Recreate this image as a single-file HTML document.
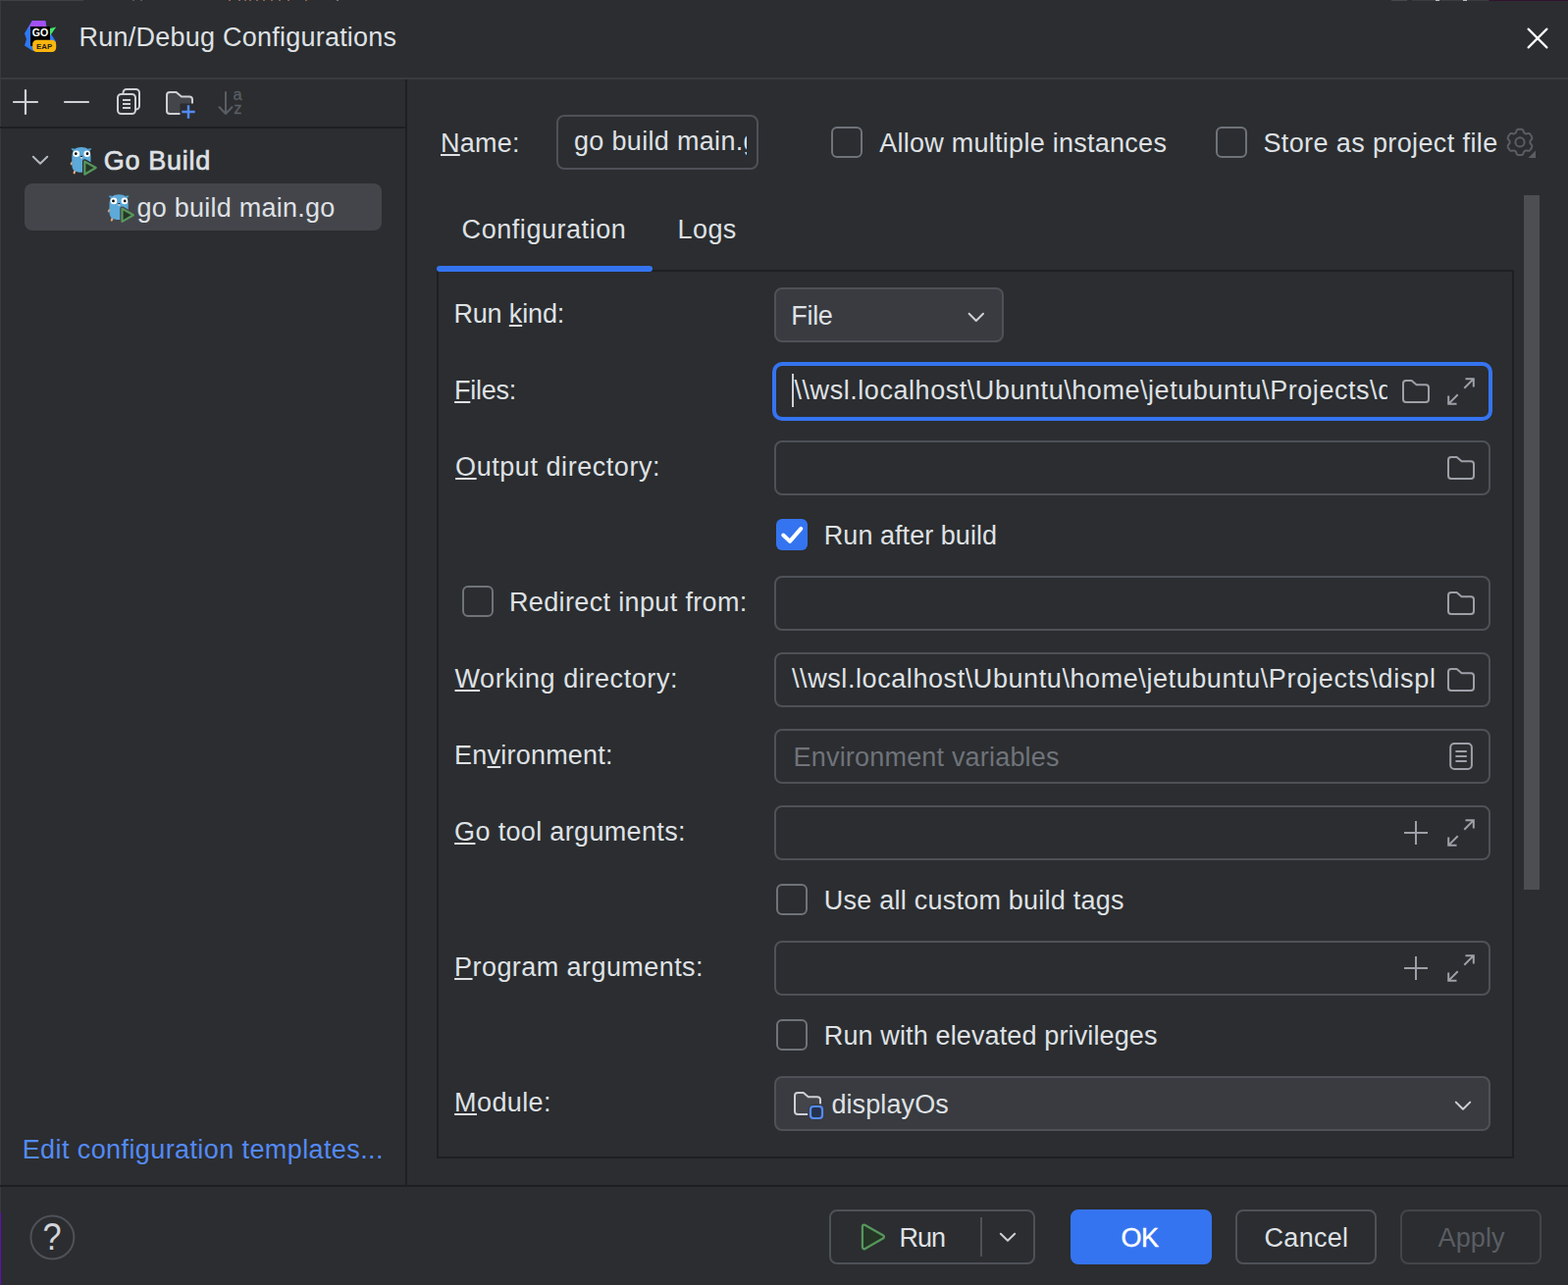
<!DOCTYPE html>
<html lang="en">
<head>
<meta charset="utf-8">
<title>Run/Debug Configurations</title>
<style>
*{box-sizing:border-box;margin:0;padding:0}
html,body{width:1598px;height:1310px;overflow:hidden;background:#2B2D30}
body{position:relative;font-family:"Liberation Sans",sans-serif;font-size:27px;color:#DFE1E5}
.a{position:absolute}
.t{position:absolute;white-space:pre;line-height:30px;height:30px;font-size:27px}
.t u{text-decoration:underline;text-decoration-thickness:2px;text-underline-offset:2px;text-decoration-skip-ink:none}
.hl{position:absolute;height:2px}
.vl{position:absolute;width:2px}
.fld{position:absolute;border:2px solid #4E5157;border-radius:8px;background:#2B2D30;height:56px}
.cmb{background:#393B40}
.cb{position:absolute;width:32px;height:32px;border:2px solid #6F737A;border-radius:6px;background:#2B2D30}
.cbx{position:absolute;width:32px;height:32px;border-radius:6px;background:#3574F0}
.btn{position:absolute;top:1233px;height:56px;border:2px solid #4E5157;border-radius:8px}
svg{position:absolute;overflow:visible}
.clip{position:absolute;overflow:hidden;height:40px}
.clip .t{position:absolute}
</style>
</head>
<body>
<!-- background remnants at very top -->
<div class="a" style="left:0;top:0;width:1px;height:1236px;background:#37393D"></div>
<div class="a" style="left:0;top:0;width:85px;height:1px;background:#3E4044"></div>
<div class="a" style="left:135px;top:0;width:2px;height:1px;background:#55585E"></div><div class="a" style="left:143px;top:0;width:2px;height:1px;background:#55585E"></div><div class="a" style="left:233px;top:0;width:2px;height:1px;background:#8A6450"></div><div class="a" style="left:243px;top:0;width:2px;height:1px;background:#8A6450"></div><div class="a" style="left:249px;top:0;width:2px;height:1px;background:#8A6450"></div><div class="a" style="left:254px;top:0;width:2px;height:1px;background:#8A6450"></div><div class="a" style="left:261px;top:0;width:2px;height:1px;background:#8A6450"></div><div class="a" style="left:268px;top:0;width:2px;height:1px;background:#8A6450"></div><div class="a" style="left:276px;top:0;width:2px;height:1px;background:#8A6450"></div><div class="a" style="left:284px;top:0;width:2px;height:1px;background:#8A6450"></div><div class="a" style="left:293px;top:0;width:2px;height:1px;background:#8A6450"></div><div class="a" style="left:311px;top:0;width:2px;height:1px;background:#8A6450"></div><div class="a" style="left:343px;top:0;width:2px;height:1px;background:#6C7A8A"></div>
<div class="a" style="left:1418px;top:0;width:16px;height:1px;background:#45474B"></div>
<div class="a" style="left:1439px;top:0;width:78px;height:1px;background:#3A3C40"></div><div class="a" style="left:1463px;top:0;width:4px;height:1px;background:#B9BBC0"></div><div class="a" style="left:1491px;top:0;width:4px;height:1px;background:#B9BBC0"></div>
<div class="a" style="left:1518px;top:0;width:80px;height:1px;background:#32122F"></div>
<div class="a" style="left:0;top:1236px;width:1px;height:74px;background:#5E10B5"></div>

<!-- title bar -->
<div class="hl" style="left:0;top:79px;width:1598px;background:#393B40"></div>
<svg style="left:24px;top:20px" width="36" height="36" viewBox="24 20 36 36">
<polygon points="32.8,21 46.2,21 47.4,27.2 57,42.5 50,52 33.2,51.8 25,46.4 27,40 25,34.1" fill="#2E78F6"/>
<polygon points="32.8,21 46.2,21 47.4,27.2 31,27.2 28,31" fill="#A24FF7"/>
<polygon points="51,29 57.2,27.4 51,36.4" fill="#3FE86A"/>
<rect x="31" y="27" width="20" height="20" fill="#000"/>
<rect x="33.2" y="40.8" width="24" height="12.2" rx="4.2" fill="#FDB60D"/>
<text x="41" y="37.1" text-anchor="middle" font-family="Liberation Sans, sans-serif" font-weight="700" font-size="10.6" fill="#fff">GO</text>
<text x="45.1" y="49.6" text-anchor="middle" font-family="Liberation Sans, sans-serif" font-weight="700" font-size="7.8" fill="#1E1F22">EAP</text>
</svg>
<svg style="left:1555px;top:27px" width="24" height="24" viewBox="0 0 24 24"><path d="M2.6 2.6 L21.4 21.4 M21.4 2.6 L2.6 21.4" stroke="#FFFFFF" stroke-width="2.2" stroke-linecap="round" fill="none"/></svg>

<!-- left panel -->
<div class="hl" style="left:0;top:129px;width:414px;background:#1E1F22"></div>
<div class="vl" style="left:413px;top:81px;height:1128px;background:#1E1F22"></div>
<svg style="left:0;top:81px" width="413" height="48" viewBox="0 81 413 48" fill="none" stroke-linecap="round" stroke-linejoin="round">
<path d="M14 104 H38 M26 92 V116" stroke="#CED0D6" stroke-width="2.2"/>
<path d="M66 104 H90" stroke="#CED0D6" stroke-width="2.2"/>
<path d="M125.5 95 V94.5 a3.5 3.5 0 0 1 3.5 -3.5 h9.5 a3.5 3.5 0 0 1 3.5 3.5 v13.5 a3.5 3.5 0 0 1 -3.5 3.5 H138" stroke="#CED0D6" stroke-width="2"/>
<rect x="120" y="96" width="18" height="20" rx="3.5" stroke="#CED0D6" stroke-width="2"/>
<path d="M125 102 h8 M125 106 h8 M125 110 h8" stroke="#CED0D6" stroke-width="2" stroke-linecap="butt"/>
<path d="M170 97 a3 3 0 0 1 3 -3 h6.6 l5.4 4.6 h8 a3 3 0 0 1 3 3 v11.4 a3 3 0 0 1 -3 3 h-20 a3 3 0 0 1 -3 -3 z" fill="#43454A" stroke="#CED0D6" stroke-width="2"/>
<rect x="183.5" y="105.5" width="17" height="17" fill="#2B2D30" stroke="none"/>
<path d="M185.3 114 h13.4 M192 107.3 v13.4" stroke="#548AF7" stroke-width="2.4" stroke-linecap="butt"/>
<path d="M230 94 V115.5 M223.5 109.3 L230 116 L236.5 109.3" stroke="#5A5D63" stroke-width="2"/>
<text x="237.6" y="102.4" font-family="Liberation Sans, sans-serif" font-size="16.5" fill="#5A5D63" stroke="#5A5D63" stroke-width="0.3">a</text>
<text x="238.2" y="116.4" font-family="Liberation Sans, sans-serif" font-size="16.5" fill="#5A5D63" stroke="#5A5D63" stroke-width="0.3">z</text>
</svg>
<div class="a" style="left:25px;top:187px;width:364px;height:48px;border-radius:8px;background:#43454A"></div>
<svg style="left:0;top:140px" width="413" height="100" viewBox="0 140 413 100" fill="none">
<path d="M33.8 159.7 L41 166.8 L48.2 159.7" stroke="#B4B8BF" stroke-width="2" stroke-linecap="round" stroke-linejoin="round"/>
<g transform="translate(0,0)">
<path d="M74.6 153.6 L72.9 151.7 L76 151.9 Z M91.2 153.6 L92.9 151.7 L89.8 151.9 Z" fill="#4FA0CC" stroke="#4FA0CC" stroke-width="0.8" stroke-linejoin="round"/>
<path d="M73.6 165.6 l-0.9 1.5 M76.2 174.6 l-0.6 1.7" stroke="#E0A680" stroke-width="2.2" stroke-linecap="round"/>
<path d="M73.3 160 C73.3 152.6 77 150 82.9 150 C88.8 150 92.5 152.6 92.5 160 L92.5 168 C92.5 173.6 89.4 175.8 82.9 175.8 C76.4 175.8 73.3 173.6 73.3 168 Z" fill="#5DA9D8"/>
<circle cx="77.8" cy="156.7" r="3.3" fill="#fff"/><circle cx="88.7" cy="156.7" r="3.3" fill="#fff"/>
<circle cx="77.3" cy="156.7" r="1.35" fill="#000"/><circle cx="89" cy="156.7" r="1.35" fill="#000"/>
<ellipse cx="83.1" cy="159.4" rx="1.1" ry="0.7" fill="#111"/>
<rect x="82.1" y="160.1" width="2" height="1.5" rx="0.6" fill="#F3D9C4"/>
<path d="M86.3 164.6 L97.7 171 L86.3 177.7 Z" fill="#253627" stroke="#2B2D30" stroke-width="4.6" stroke-linejoin="round"/>
<path d="M86.3 164.6 L97.7 171 L86.3 177.7 Z" fill="#253627" stroke="#57965C" stroke-width="2.2" stroke-linejoin="round"/>
</g><g transform="translate(38.2,48.2)">
<path d="M74.6 153.6 L72.9 151.7 L76 151.9 Z M91.2 153.6 L92.9 151.7 L89.8 151.9 Z" fill="#4FA0CC" stroke="#4FA0CC" stroke-width="0.8" stroke-linejoin="round"/>
<path d="M73.6 165.6 l-0.9 1.5 M76.2 174.6 l-0.6 1.7" stroke="#E0A680" stroke-width="2.2" stroke-linecap="round"/>
<path d="M73.3 160 C73.3 152.6 77 150 82.9 150 C88.8 150 92.5 152.6 92.5 160 L92.5 168 C92.5 173.6 89.4 175.8 82.9 175.8 C76.4 175.8 73.3 173.6 73.3 168 Z" fill="#5DA9D8"/>
<circle cx="77.8" cy="156.7" r="3.3" fill="#fff"/><circle cx="88.7" cy="156.7" r="3.3" fill="#fff"/>
<circle cx="77.3" cy="156.7" r="1.35" fill="#000"/><circle cx="89" cy="156.7" r="1.35" fill="#000"/>
<ellipse cx="83.1" cy="159.4" rx="1.1" ry="0.7" fill="#111"/>
<rect x="82.1" y="160.1" width="2" height="1.5" rx="0.6" fill="#F3D9C4"/>
<path d="M86.3 164.6 L97.7 171 L86.3 177.7 Z" fill="#253627" stroke="#43454A" stroke-width="4.6" stroke-linejoin="round"/>
<path d="M86.3 164.6 L97.7 171 L86.3 177.7 Z" fill="#253627" stroke="#57965C" stroke-width="2.2" stroke-linejoin="round"/>
</g>
</svg>

<!-- bottom bar -->
<div class="hl" style="left:0;top:1208px;width:1598px;background:#1E1F22"></div>
<svg style="left:28px;top:1236px" width="52" height="52" viewBox="28 1236 52 52" fill="none"><circle cx="53.4" cy="1261.5" r="22" stroke="#4E5157" stroke-width="2"/></svg>
<div class="btn" style="left:845px;width:210px"></div>
<div class="a" style="left:999px;top:1241px;width:2px;height:40px;background:#4E5157"></div>
<div class="btn" style="left:1091px;width:144px;background:#3574F0;border-color:#3574F0"></div>
<div class="btn" style="left:1259px;width:144px"></div>
<div class="btn" style="left:1427px;width:144px;border-color:#43454A"></div>
<svg style="left:845px;top:1233px" width="210" height="56" viewBox="845 1233 210 56" fill="none">
<path d="M880.8 1250.6 L898.9 1260.9 L880.8 1271.3 Z" fill="#57965C" stroke="#57965C" stroke-width="6" stroke-linejoin="round"/><path d="M880.8 1250.6 L898.9 1260.9 L880.8 1271.3 Z" fill="#253627" stroke="#253627" stroke-width="1.5" stroke-linejoin="round"/>
<path d="M1019.8 1257.7 L1027 1264.8 L1034.2 1257.7" stroke="#CED0D6" stroke-width="2" stroke-linecap="round" stroke-linejoin="round"/>
</svg>
<div class="t" id="q" style="left:42.3px;top:1238.6px;width:22px;text-align:center;font-size:39px;line-height:44px;height:44px;color:#D3D5DA;transform:scaleX(0.88)">?</div>

<!-- right: name row -->
<div class="fld" style="left:567px;top:117px;width:206px"></div>
<div class="cb" style="left:847px;top:129px"></div>
<div class="cb" style="left:1239px;top:129px"></div>
<svg style="left:1530px;top:126px" width="40" height="40" viewBox="1530 126 40 40" fill="none">
<path d="M1549.0 131.7 L1549.5 131.7 L1549.9 131.7 L1550.4 131.8 L1550.8 131.9 L1551.3 132.0 L1551.7 132.2 L1552.1 132.5 L1552.4 133.0 L1552.6 133.7 L1552.8 134.4 L1553.0 134.9 L1553.3 135.3 L1553.6 135.6 L1553.8 135.8 L1554.2 136.0 L1554.5 136.1 L1554.8 136.3 L1555.2 136.4 L1555.6 136.4 L1556.2 136.3 L1556.9 136.1 L1557.6 136.0 L1558.2 136.0 L1558.7 136.2 L1559.0 136.5 L1559.4 136.8 L1559.7 137.2 L1559.9 137.5 L1560.2 137.9 L1560.4 138.3 L1560.7 138.7 L1560.9 139.1 L1561.0 139.5 L1561.2 140.0 L1561.3 140.4 L1561.4 140.9 L1561.3 141.4 L1561.0 141.9 L1560.5 142.5 L1560.0 143.0 L1559.7 143.4 L1559.5 143.8 L1559.4 144.2 L1559.3 144.5 L1559.3 144.9 L1559.3 145.3 L1559.4 145.6 L1559.5 146.0 L1559.7 146.4 L1560.0 146.8 L1560.5 147.3 L1561.0 147.9 L1561.3 148.4 L1561.4 148.9 L1561.3 149.4 L1561.2 149.8 L1561.0 150.3 L1560.9 150.7 L1560.7 151.1 L1560.4 151.5 L1560.2 151.9 L1559.9 152.3 L1559.7 152.6 L1559.4 153.0 L1559.0 153.3 L1558.7 153.6 L1558.2 153.8 L1557.6 153.8 L1556.9 153.7 L1556.2 153.5 L1555.6 153.4 L1555.2 153.4 L1554.8 153.5 L1554.5 153.7 L1554.2 153.8 L1553.8 154.0 L1553.6 154.2 L1553.3 154.5 L1553.0 154.9 L1552.8 155.4 L1552.6 156.1 L1552.4 156.8 L1552.1 157.3 L1551.7 157.6 L1551.3 157.8 L1550.8 157.9 L1550.4 158.0 L1549.9 158.1 L1549.5 158.1 L1549.0 158.1 L1548.5 158.1 L1548.1 158.1 L1547.6 158.0 L1547.2 157.9 L1546.7 157.8 L1546.3 157.6 L1545.9 157.3 L1545.6 156.8 L1545.4 156.1 L1545.2 155.4 L1545.0 154.9 L1544.7 154.5 L1544.4 154.2 L1544.2 154.0 L1543.8 153.8 L1543.5 153.7 L1543.2 153.5 L1542.8 153.4 L1542.4 153.4 L1541.8 153.5 L1541.1 153.7 L1540.4 153.8 L1539.8 153.8 L1539.3 153.6 L1539.0 153.3 L1538.6 153.0 L1538.3 152.6 L1538.1 152.3 L1537.8 151.9 L1537.6 151.5 L1537.3 151.1 L1537.1 150.7 L1537.0 150.3 L1536.8 149.8 L1536.7 149.4 L1536.6 148.9 L1536.7 148.4 L1537.0 147.9 L1537.5 147.3 L1538.0 146.8 L1538.3 146.4 L1538.5 146.0 L1538.6 145.6 L1538.7 145.3 L1538.7 144.9 L1538.7 144.5 L1538.6 144.2 L1538.5 143.8 L1538.3 143.4 L1538.0 143.0 L1537.5 142.5 L1537.0 141.9 L1536.7 141.4 L1536.6 140.9 L1536.7 140.4 L1536.8 140.0 L1537.0 139.5 L1537.1 139.1 L1537.3 138.7 L1537.6 138.3 L1537.8 137.9 L1538.1 137.5 L1538.3 137.2 L1538.6 136.8 L1539.0 136.5 L1539.3 136.2 L1539.8 136.0 L1540.4 136.0 L1541.1 136.1 L1541.8 136.3 L1542.4 136.4 L1542.8 136.4 L1543.2 136.3 L1543.5 136.1 L1543.8 136.0 L1544.2 135.8 L1544.4 135.6 L1544.7 135.3 L1545.0 134.9 L1545.2 134.4 L1545.4 133.7 L1545.6 133.0 L1545.9 132.5 L1546.3 132.2 L1546.7 132.0 L1547.2 131.9 L1547.6 131.8 L1548.1 131.7 L1548.5 131.7 Z" stroke="#5A5D63" stroke-width="2" stroke-linejoin="round"/>
<circle cx="1549" cy="144.9" r="4.6" stroke="#5A5D63" stroke-width="2"/>
<path d="M1565 153.4 V161 H1557.4 Z" fill="#5A5D63"/>
</svg>

<!-- tabs + panel -->
<div class="a" style="left:445px;top:275px;width:1098px;height:906px;border:2px solid #1E1F22"></div>
<div class="a" style="left:445px;top:271px;width:220px;height:6px;border-radius:3px;background:#3574F0"></div>
<div class="a" style="left:1553px;top:199px;width:16px;height:708px;background:#4D4E51"></div>

<!-- fields -->
<div class="fld cmb" style="left:789px;top:293px;width:234px"></div>
<div class="a" style="left:787px;top:369px;width:734px;height:60px;border:4px solid #3574F0;border-radius:10px;background:#2B2D30"></div>
<div class="fld" style="left:789px;top:449px;width:730px"></div>
<div class="cbx" style="left:791px;top:529px"></div>
<div class="cb" style="left:471px;top:597px"></div>
<div class="fld" style="left:789px;top:587px;width:730px"></div>
<div class="fld" style="left:789px;top:665px;width:730px"></div>
<div class="fld" style="left:789px;top:743px;width:730px"></div>
<div class="fld" style="left:789px;top:821px;width:730px"></div>
<div class="cb" style="left:791px;top:901px"></div>
<div class="fld" style="left:789px;top:959px;width:730px"></div>
<div class="cb" style="left:791px;top:1039px"></div>
<div class="fld cmb" style="left:789px;top:1097px;width:730px"></div>
<svg style="left:780px;top:280px" width="760" height="900" viewBox="780 280 760 900" fill="none"><path d="M987.5999999999999 319.79999999999995 L994.8 327 L1002 319.79999999999995" stroke="#CED0D6" stroke-width="2" stroke-linecap="round" stroke-linejoin="round"/><path d="M1430 391 a3 3 0 0 1 3 -3 h5.6 l5 4.2 h9.4 a3 3 0 0 1 3 3 v11.8 a3 3 0 0 1 -3 3 h-20 a3 3 0 0 1 -3 -3 z" stroke="#9DA0A8" stroke-width="2" stroke-linejoin="round"/><path d="M1492.3 395.7 L1501.6 386.4 M1493.5 386.2 H1501.8 V394.5" stroke="#9DA0A8" stroke-width="2" stroke-linecap="butt" stroke-linejoin="miter"/><path d="M1485.7 402.3 L1476.4 411.6 M1476.2 403.5 V411.8 H1484.5" stroke="#9DA0A8" stroke-width="2" stroke-linecap="butt" stroke-linejoin="miter"/><path d="M1476 469 a3 3 0 0 1 3 -3 h5.6 l5 4.2 h9.4 a3 3 0 0 1 3 3 v11.8 a3 3 0 0 1 -3 3 h-20 a3 3 0 0 1 -3 -3 z" stroke="#9DA0A8" stroke-width="2" stroke-linejoin="round"/><path d="M1476 607 a3 3 0 0 1 3 -3 h5.6 l5 4.2 h9.4 a3 3 0 0 1 3 3 v11.8 a3 3 0 0 1 -3 3 h-20 a3 3 0 0 1 -3 -3 z" stroke="#9DA0A8" stroke-width="2" stroke-linejoin="round"/><path d="M1476 685 a3 3 0 0 1 3 -3 h5.6 l5 4.2 h9.4 a3 3 0 0 1 3 3 v11.8 a3 3 0 0 1 -3 3 h-20 a3 3 0 0 1 -3 -3 z" stroke="#9DA0A8" stroke-width="2" stroke-linejoin="round"/><rect x="1478.2" y="758.1" width="21.7" height="25.8" rx="4" stroke="#9DA0A8" stroke-width="2"/><path d="M1483.4 766 h11.4 M1483.4 771 h11.4 M1483.4 776 h11.4" stroke="#9DA0A8" stroke-width="2"/><path d="M1431 849 H1455 M1443 837 V861" stroke="#9DA0A8" stroke-width="2"/><path d="M1492.3 845.7 L1501.6 836.4 M1493.5 836.2 H1501.8 V844.5" stroke="#9DA0A8" stroke-width="2" stroke-linecap="butt" stroke-linejoin="miter"/><path d="M1485.7 852.3 L1476.4 861.6 M1476.2 853.5 V861.8 H1484.5" stroke="#9DA0A8" stroke-width="2" stroke-linecap="butt" stroke-linejoin="miter"/><path d="M1431 987 H1455 M1443 975 V999" stroke="#9DA0A8" stroke-width="2"/><path d="M1492.3 983.7 L1501.6 974.4 M1493.5 974.2 H1501.8 V982.5" stroke="#9DA0A8" stroke-width="2" stroke-linecap="butt" stroke-linejoin="miter"/><path d="M1485.7 990.3 L1476.4 999.6 M1476.2 991.5 V999.8 H1484.5" stroke="#9DA0A8" stroke-width="2" stroke-linecap="butt" stroke-linejoin="miter"/><path d="M1483.8 1123.6000000000001 L1491 1130.8 L1498.2 1123.6000000000001" stroke="#CED0D6" stroke-width="2" stroke-linecap="round" stroke-linejoin="round"/><path d="M813 1114 h5.8 l5 4.2 h9.2 a3 3 0 0 1 3 3 v11.8 a3 3 0 0 1 -3 3 h-20 a3 3 0 0 1 -3 -3 v-16 a3 3 0 0 1 3 -3 z" fill="#43454A"/><path d="M836 1125.6 V1121.2 a3 3 0 0 0 -3 -3 h-9.2 l-5 -4.2 h-5.8 a3 3 0 0 0 -3 3 v16 a3 3 0 0 0 3 3 h10.2" stroke="#CED0D6" stroke-width="2" stroke-linejoin="round" stroke-linecap="butt"/><rect x="826" y="1128" width="12" height="12" rx="3" fill="#393B40" stroke="#393B40" stroke-width="5"/><rect x="826" y="1128" width="12" height="12" rx="3" fill="#25324D" stroke="#548AF7" stroke-width="2.2"/><path d="M798.3 545.5 L805 551.9 L816.3 538.9" stroke="#fff" stroke-width="4" stroke-linecap="round" stroke-linejoin="round"/></svg>

<!-- caret -->
<div class="a" style="left:807px;top:381px;width:2px;height:34px;background:#CED0D6"></div>

<div class="clip" style="left:580px;top:125px;width:181px"><div class="t" style="left:5px;top:4px;letter-spacing:0.32px">go build main.go</div></div>
<div class="clip" style="left:800px;top:379px;width:614.2px"><div class="t" style="left:9.5px;top:4px;letter-spacing:0.55px">\\wsl.localhost\Ubuntu\home\jetubuntu\Projects\displayOs\main.go</div></div>
<div class="clip" style="left:800px;top:673px;width:662.5px"><div class="t" style="left:7px;top:4.2px;letter-spacing:0.58px">\\wsl.localhost\Ubuntu\home\jetubuntu\<span style="letter-spacing:0.74px">Projects\displ</span>ayOs</div></div>
<div class="t" id="t_title" style="left:80.60px;top:23.00px;letter-spacing:0.230px;color:#DFE1E5;">Run/Debug Configurations</div>
<div class="t" id="t_gobuild" style="left:105.70px;top:148.60px;letter-spacing:0.708px;color:#DFE1E5;-webkit-text-stroke:0.7px #DFE1E5;">Go Build</div>
<div class="t" id="t_item" style="left:139.60px;top:196.70px;letter-spacing:0.232px;color:#DFE1E5;">go build main.go</div>
<div class="t" id="t_name" style="left:449.00px;top:130.70px;letter-spacing:0.245px;color:#DFE1E5;"><u>N</u>ame:</div>
<div class="t" id="t_allow" style="left:896.20px;top:131.00px;letter-spacing:0.264px;color:#DFE1E5;">Allow multiple instances</div>
<div class="t" id="t_store" style="left:1287.40px;top:131.00px;letter-spacing:0.385px;color:#DFE1E5;">Store as project file</div>
<div class="t" id="t_conf" style="left:470.60px;top:219.20px;letter-spacing:0.551px;color:#DFE1E5;">Configuration</div>
<div class="t" id="t_logs" style="left:690.60px;top:219.20px;letter-spacing:0.384px;color:#DFE1E5;">Logs</div>
<div class="t" id="t_runkind" style="left:462.40px;top:305.20px;letter-spacing:-0.145px;color:#DFE1E5;">Run <u>k</u>ind:</div>
<div class="t" id="t_file" style="left:806.30px;top:307.00px;letter-spacing:-0.330px;color:#DFE1E5;">File</div>
<div class="t" id="t_files" style="left:463.10px;top:383.00px;letter-spacing:-0.261px;color:#DFE1E5;"><u>F</u>iles:</div>
<div class="t" id="t_output" style="left:464.10px;top:461.00px;letter-spacing:0.551px;color:#DFE1E5;"><u>O</u>utput directory:</div>
<div class="t" id="t_runafter" style="left:839.80px;top:531.30px;letter-spacing:0.044px;color:#DFE1E5;">Run after build</div>
<div class="t" id="t_redirect" style="left:519.00px;top:599.00px;letter-spacing:0.353px;color:#DFE1E5;">Redirect input from:</div>
<div class="t" id="t_wd" style="left:463.50px;top:677.20px;letter-spacing:0.584px;color:#DFE1E5;"><u>W</u>orking directory:</div>
<div class="t" id="t_env" style="left:463.10px;top:755.20px;letter-spacing:0.212px;color:#DFE1E5;">En<u>v</u>ironment:</div>
<div class="t" id="t_envph" style="left:808.60px;top:757.20px;letter-spacing:0.189px;color:#6F737A;">Environment variables</div>
<div class="t" id="t_gotool" style="left:463.10px;top:833.00px;letter-spacing:0.340px;color:#DFE1E5;"><u>G</u>o tool arguments:</div>
<div class="t" id="t_useall" style="left:839.80px;top:902.75px;letter-spacing:0.232px;color:#DFE1E5;">Use all custom build tags</div>
<div class="t" id="t_prog" style="left:463.10px;top:971.00px;letter-spacing:0.430px;color:#DFE1E5;"><u>P</u>rogram arguments:</div>
<div class="t" id="t_elev" style="left:839.80px;top:1041.00px;letter-spacing:0.130px;color:#DFE1E5;">Run with elevated privileges</div>
<div class="t" id="t_module" style="left:463.10px;top:1109.00px;letter-spacing:0.391px;color:#DFE1E5;"><u>M</u>odule:</div>
<div class="t" id="t_disp" style="left:847.40px;top:1111.00px;letter-spacing:0.100px;color:#DFE1E5;">displayOs</div>
<div class="t" id="t_edit" style="left:22.70px;top:1157.20px;letter-spacing:0.404px;color:#548AF7;">Edit configuration templates...</div>
<div class="t" id="t_run" style="left:916.60px;top:1246.75px;letter-spacing:-1.057px;color:#DFE1E5;">Run</div>
<div class="t" id="t_ok" style="left:1142.60px;top:1246.75px;letter-spacing:-0.601px;color:#FFFFFF;-webkit-text-stroke:0.4px #fff;">OK</div>
<div class="t" id="t_cancel" style="left:1288.60px;top:1246.75px;letter-spacing:0.271px;color:#DFE1E5;">Cancel</div>
<div class="t" id="t_apply" style="left:1465.60px;top:1246.75px;letter-spacing:0.090px;color:#5A5D63;">Apply</div>
</body>
</html>
